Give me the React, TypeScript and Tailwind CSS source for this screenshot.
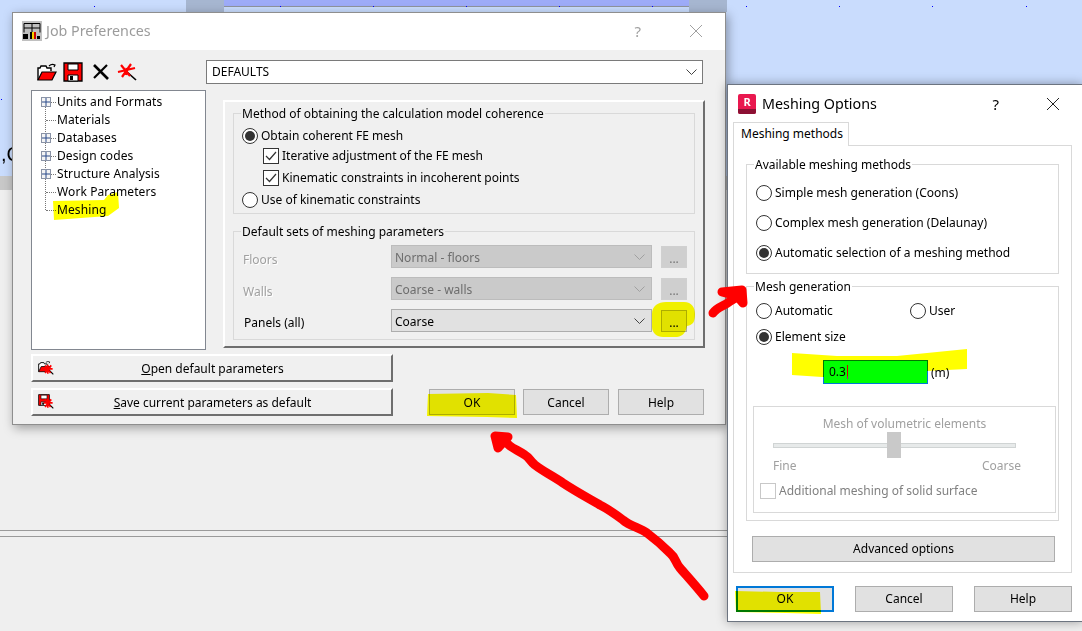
import React from "react";

const Radio = ({ on }: { on?: boolean }) => (
  <span className="flex h-[16px] w-[16px] shrink-0 items-center justify-center rounded-full border-[1.5px] border-[#333] bg-white">
    {on && <span className="h-[10px] w-[10px] rounded-full bg-[#333]" />}
  </span>
);

const Check = () => (
  <span className="flex h-[16px] w-[16px] shrink-0 items-center justify-center border border-[#333] bg-white">
    <svg width="12" height="10" viewBox="0 0 12 10"><path d="M1 5l3.5 3.5L11 1" fill="none" stroke="#333" strokeWidth="1.2" /></svg>
  </span>
);

const Chevron = ({ c = "#444" }: { c?: string }) => (
  <svg width="11" height="6" viewBox="0 0 11 6" className="shrink-0"><path d="M.5.5l5 5 5-5" fill="none" stroke={c} strokeWidth="1" /></svg>
);

const Cross = ({ c }: { c: string }) => (
  <svg width="14" height="14" viewBox="0 0 14 14" className="block"><path d="M1 1l12 12M13 1L1 13" stroke={c} strokeWidth="1" fill="none" /></svg>
);

const Combo = ({ label, off }: { label: string; off?: boolean }) => (
  <div className={`flex h-[23px] w-[261px] items-center justify-between border pl-[3px] pr-[6px] ${off ? "border-[#bcbcbc] bg-[#cacaca] text-[#6d6d6d]" : "border-[#adadad] bg-[#e1e1e1] text-black"}`}>
    <span className="pt-[2px]">{label}</span>
    <Chevron c={off ? "#a0a0a0" : "#444"} />
  </div>
);

const Dots = ({ off }: { off?: boolean }) => (
  <div className={`mt-[1px] flex h-[22px] w-[26px] items-end justify-center border pb-[2px] leading-none ${off ? "border-[#d0d0d0] bg-[#cfcfcf] text-[#777]" : "border-[#adadad] bg-[#e1e1e1] text-black"}`}>...</div>
);

const Btn = ({ children, w, focus }: { children: React.ReactNode; w: string; focus?: boolean }) => (
  <div className={`flex h-[26px] items-center justify-center ${w} ${focus ? "border-2 border-[#0078d7] bg-[#e1e1e1]" : "border border-[#adadad] bg-[#e1e1e1]"}`}>{children}</div>
);

const Group = ({ title, h, bg, children }: { title: string; h: string; bg: string; children: React.ReactNode }) => (
  <div className={`relative border border-[#d9d9d9] ${h}`}>
    <span className={`absolute left-[7px] top-[-8px] px-[1px] leading-[16px] ${bg}`}>{title}</span>
    {children}
  </div>
);

const Folder = ({ s = 20 }: { s?: number }) => (
  <svg width={s} height={s} viewBox="0 0 20 20" className="block shrink-0">
    <path d="M1 18V6h2l1-2h5l1 2h4v3" fill="#fff" stroke="#000" strokeWidth="1.4" />
    <path d="M1 18l4-8h14l-4 8z" fill="#f00" stroke="#000" strokeWidth="1.2" />
    <path d="M12 4c2-2 4-2 6-1l-1 2" fill="none" stroke="#000" strokeWidth="1.2" />
  </svg>
);

const Floppy = ({ s = 20 }: { s?: number }) => (
  <svg width={s} height={s} viewBox="0 0 20 20" className="block shrink-0">
    <path d="M1 1h18v18H1z" fill="#f00" stroke="#000" strokeWidth="1.3" />
    <path d="M5 2h10v6H5z" fill="#fff" stroke="#000" strokeWidth="1" />
    <path d="M5 13h10v6H5z" fill="#fff" stroke="#000" strokeWidth="1" />
    <path d="M7 14h3v4H7z" fill="#000" />
  </svg>
);

const XIcon = () => (
  <svg width="18" height="18" viewBox="0 0 18 18" className="block shrink-0">
    <path d="M2 2l14 14" stroke="#000" strokeWidth="2.6" />
    <path d="M15 2L2 15" stroke="#000" strokeWidth="2.2" />
  </svg>
);

const Star = () => (
  <svg width="20" height="18" viewBox="0 0 20 18" className="block shrink-0">
    <path d="M10 9l9 8" stroke="#000" strokeWidth="1.6" />
    <path d="M1 9l17-4M4 2l9 11M14 1L5 14" stroke="#f00" strokeWidth="2.2" />
    <path d="M10 5l-1 7" stroke="#f00" strokeWidth="3" />
  </svg>
);

const SmallStar = () => (
  <svg width="11" height="11" viewBox="0 0 16 16" className="absolute left-[5px] top-[4px]">
    <path d="M8 8l7 7" stroke="#000" strokeWidth="1.6" />
    <path d="M1 7h13M3 2l8 11M12 2L3 13M7 1v13" stroke="#f00" strokeWidth="2.4" />
  </svg>
);

const JobIcon = () => (
  <svg width="20" height="20" viewBox="0 0 20 20" className="shrink-0">
    <rect width="20" height="20" fill="#c0c0c0" />
    <path d="M2 2.5h16M2 2.5v9M10 2.5v9M18 2.5v9M2 7h16" stroke="#000" strokeWidth="1" fill="none" />
    <rect x="1" y="13" width="5" height="5" fill="#000" />
    <rect x="8" y="11" width="2" height="7" fill="#000" />
    <rect x="10" y="11" width="2" height="7" fill="#f2d400" />
    <rect x="12" y="11" width="2" height="7" fill="#c00" />
    <rect x="15" y="15" width="3" height="3" fill="#000" />
  </svg>
);

const Tree = ({ label, plus }: { label: string; plus?: boolean }) => (
  <div className="flex h-[18px] items-center">
    <span className="flex w-[25px] items-center pl-[9px]">
      {plus ? (
        <span className="z-10 flex h-[10px] w-[10px] shrink-0 items-center justify-center border border-[#8a93a6] bg-[#f4f4f4]">
          <svg width="8" height="8" viewBox="0 0 8 8"><path d="M0 4h8M4 0v8" stroke="#2a4a8a" strokeWidth="1" /></svg>
        </span>
      ) : <span className="ml-[4px] w-[1px]" />}
      <span className={`border-t border-dotted border-[#777] ${plus ? "w-[5px]" : "w-[10px]"}`} />
    </span>
    <span className="tracking-[0.1px]">{label}</span>
  </div>
);

const treeItems: [string, boolean][] = [
  ["Units and Formats", true], ["Materials", false], ["Databases", true], ["Design codes", true],
  ["Structure Analysis", true], ["Work Parameters", false], ["Meshing", false],
];

const grid: [number, number][] = [[94, 6], [280, 6], [373, 6], [466, 6], [559, 6], [652, 6], [746, 6], [839, 6], [932, 6], [1026, 6], [1, 99]];

const Raised = ({ children, icon }: { children: React.ReactNode; icon: React.ReactNode }) => (
  <div className="relative flex h-[28px] w-[362px] items-center justify-center border-2 border-b-[#6e6e6e] border-l-white border-r-[#6e6e6e] border-t-white bg-[#f0f0f0] pt-[1px]">
    <span className="absolute left-[5px] top-[4px]">{icon}</span>
    <span className="pl-[1px]">{children}</span>
  </div>
);

export default function App() {
  return (
    <div className="relative h-[631px] w-[1082px] overflow-hidden bg-[#efefef] font-['Noto_Sans',sans-serif] text-[12px] leading-[16px] text-black">
      {/* desktop behind the windows */}
      <div className="flex h-[12px]">
        <div className="w-[186px] bg-[#c9dcfd]" />
        <div className="w-[38px] bg-[#a6b6d0]" />
        <div className="flex w-[465px] flex-col">
          <div className="h-[6px] bg-[#9dabf8]" />
          <div className="h-[1px] bg-[#8f949c]" />
          <div className="flex-1 bg-[#c9dcfd]" />
        </div>
        <div className="w-[38px] bg-[#a6b6d0]" />
        <div className="flex-1 bg-[#c9dcfd]" />
      </div>
      <div className="h-[164px] bg-[#c9dcfd]" />
      <div className="h-[14px] bg-[#c8c8c8]" />
      <div className="mt-[340px] h-[1px] bg-[#9a9a9a]" />
      <div className="mt-[5px] h-[1px] bg-[#9a9a9a]" />
      <span className="absolute left-[1px] top-[139px] font-['Liberation_Sans',sans-serif] text-[20px] leading-[30px]">,C</span>
      {grid.map(([x, y]) => (
        <span key={`${x}-${y}`} className="absolute h-[1px] w-[1px] bg-[#0000ff]" style={{ left: x, top: y }} />
      ))}

      {/* Job Preferences */}
      <div className="absolute left-[12px] top-[12px] flex h-[413px] w-[714px] flex-col border border-[#8e8e8e] shadow-[2px_3px_10px_rgba(0,0,0,0.35)]">
        <div className="flex h-[37px] shrink-0 items-center bg-white pb-[1px] pl-[9px]">
          <JobIcon />
          <span className="ml-[4px] text-[14.3px] text-[#9c9c9c]">Job Preferences</span>
          <span className="ml-auto text-[15px] text-[#a0a0a0]">?</span>
          <span className="ml-[48px] mr-[22px]"><Cross c="#a0a0a0" /></span>
        </div>
        <div className="flex-1 bg-[#f0f0f0] pl-[18px] pt-[10px]">
          <div className="flex h-[23px]">
            <div className="flex w-[175px] items-center gap-[6px] pl-[6px]">
              <Folder />
              <Floppy />
              <span className="ml-[3px]"><XIcon /></span>
              <span className="ml-[1px]"><Star /></span>
            </div>
            <div className="flex h-[24px] w-[497px] items-center justify-between border border-[#7a7a7a] bg-white pl-[5px] pr-[5px]">
              <span>DEFAULTS</span>
              <Chevron />
            </div>
          </div>
          <div className="mt-[7px] flex">
            <div className="relative h-[260px] w-[175px] border border-[#828790] bg-white">
              <div className="absolute left-[13px] top-[8px] h-[111px] border-l border-dotted border-[#777]" />
              <div className="relative pt-[2px]">
                {treeItems.map(([l, p]) => <Tree key={l} label={l} plus={p} />)}
              </div>
            </div>
            <div className="ml-[17px] mt-[10px] h-[248px] w-[482px] border-2 border-b-[#6e6e6e] border-l-white border-r-[#6e6e6e] border-t-white px-[8px] pt-[11px]">
              <Group title="Method of obtaining the calculation model coherence" h="h-[101px]" bg="bg-[#f0f0f0]">
                <div className="flex flex-col pl-[8px] pt-[12px]">
                  <div className="flex h-[20px] items-center gap-[3px]"><Radio on /><span>Obtain coherent FE mesh</span></div>
                  <div className="flex h-[20px] items-center gap-[3px] pl-[21px]"><Check /><span>Iterative adjustment of the FE mesh</span></div>
                  <div className="mt-[2px] flex h-[20px] items-center gap-[3px] pl-[21px]"><Check /><span>Kinematic constraints in incoherent points</span></div>
                  <div className="mt-[2px] flex h-[20px] items-center gap-[3px]"><Radio /><span>Use of kinematic constraints</span></div>
                </div>
              </Group>
              <div className="h-[17px]" />
              <Group title="Default sets of meshing parameters" h="h-[109px]" bg="bg-[#f0f0f0]">
                <div className="flex flex-col gap-[9px] pl-[9px] pt-[13px]">
                  <div className="flex gap-[9px]">
                    <span className="w-[139px] pt-[7px] text-[#a0a0a0] [text-shadow:1px_1px_0_#fff]">Floors</span>
                    <Combo label="Normal - floors" off />
                    <Dots off />
                  </div>
                  <div className="flex gap-[9px]">
                    <span className="w-[139px] pt-[7px] text-[#a0a0a0] [text-shadow:1px_1px_0_#fff]">Walls</span>
                    <Combo label="Coarse - walls" off />
                    <Dots off />
                  </div>
                  <div className="flex gap-[9px]">
                    <span className="w-[139px] pl-[1px] pt-[6px]">Panels (all)</span>
                    <Combo label="Coarse" />
                    <Dots />
                  </div>
                </div>
              </Group>
            </div>
          </div>
          <div className="flex">
            <div className="flex flex-col gap-[6px] pt-[4px]">
              <Raised icon={<span className="relative block h-[15px] w-[16px]"><Folder s={13} /><SmallStar /></span>}>
                <u>O</u>pen default parameters
              </Raised>
              <Raised icon={<span className="relative block h-[15px] w-[16px]"><Floppy s={12} /><SmallStar /></span>}>
                <u>S</u>ave current parameters as default
              </Raised>
            </div>
            <div className="ml-[36px] flex gap-[8px] pt-[39px]">
              <Btn w="w-[86px]"><span className="pt-[1px]">OK</span></Btn>
              <Btn w="w-[86px]"><span className="pt-[1px]">Cancel</span></Btn>
              <div className="ml-[1px]"><Btn w="w-[86px]"><span className="pt-[1px]">Help</span></Btn></div>
            </div>
          </div>
        </div>
      </div>

      {/* Meshing Options */}
      <div className="absolute left-[727px] top-[84px] flex h-[538px] w-[356px] flex-col border border-[#6c7480] bg-white shadow-[0_0_10px_rgba(0,0,0,0.35)]">
        <div className="flex h-[37px] shrink-0 items-center pl-[10px]">
          <div className="flex h-[20px] w-[18px] shrink-0 flex-col overflow-hidden rounded-[2px] bg-[#e9184f]">
            <span className="flex-1 text-center text-[11px] font-bold leading-[15px] text-white">R</span>
            <span className="h-[5px] bg-[#8c1033]" />
          </div>
          <span className="ml-[6px] whitespace-nowrap text-[14.3px]">Meshing Options</span>
          <span className="ml-auto text-[15px]">?</span>
          <span className="ml-[47px] mr-[22px]"><Cross c="#222" /></span>
        </div>
        <div className="relative z-10 ml-[5px] flex h-[24px] w-[116px] items-center border border-b-0 border-[#d9d9d9] bg-white pb-[1px] pl-[7px]">Meshing methods</div>
        <div className="-mt-px ml-[5px] h-[428px] w-[339px] border border-[#d9d9d9] px-[12px] pt-[18px]">
          <Group title="Available meshing methods" h="h-[110px]" bg="bg-white">
            <div className="flex flex-col gap-[10px] pl-[9px] pt-[18px]">
              <div className="flex h-[20px] items-center gap-[3px]"><Radio /><span>Simple mesh generation (Coons)</span></div>
              <div className="flex h-[20px] items-center gap-[3px]"><Radio /><span>Complex mesh generation (Delaunay)</span></div>
              <div className="flex h-[20px] items-center gap-[3px]"><Radio on /><span>Automatic selection of a meshing method</span></div>
            </div>
          </Group>
          <div className="h-[12px]" />
          <Group title="Mesh generation" h="h-[235px]" bg="bg-white">
            <div className="pl-[9px] pt-[14px]">
              <div className="flex h-[20px] items-center">
                <span className="flex w-[154px] items-center gap-[3px]"><Radio /><span>Automatic</span></span>
                <span className="flex items-center gap-[3px]"><Radio /><span>User</span></span>
              </div>
              <div className="mt-[6px] flex h-[20px] items-center gap-[3px]"><Radio on /><span>Element size</span></div>
              <div className="mt-[13px] flex items-center pl-[67px]">
                <div className="flex h-[24px] w-[105px] items-center border border-[#0078d7] bg-[#00ff00] pl-[5px]">
                  <span>0.3</span><span className="ml-[1px] h-[14px] w-[1px] bg-[#d0008a]" />
                </div>
                <span className="ml-[3px] pt-[1px]">(m)</span>
              </div>
            </div>
            <div className="ml-[6px] mt-[22px] h-[107px] w-[303px] border border-[#d9d9d9] pt-[9px] text-[#a0a0a0]">
              <div className="text-center">Mesh of volumetric elements</div>
              <div className="relative ml-[19px] mt-[11px] h-[5px] w-[243px] border border-[#d0d4d4] bg-[#e7eaea]">
                <span className="absolute left-[113px] top-[-12px] h-[26px] w-[14px] bg-[#c9c9c9]" />
              </div>
              <div className="ml-[19px] mt-[10px] flex w-[248px] justify-between"><span>Fine</span><span>Coarse</span></div>
              <div className="ml-[6px] mt-[9px] flex items-center gap-[3px] text-[#808080]">
                <span className="h-[16px] w-[16px] border border-[#c8c8c8]" />
                <span>Additional meshing of solid surface</span>
              </div>
            </div>
          </Group>
          <div className="ml-[6px] mt-[15px]">
            <Btn w="w-[303px]">Advanced options</Btn>
          </div>
        </div>
        <div className="ml-[8px] mt-[13px] flex">
          <Btn w="w-[98px]" focus>OK</Btn>
          <div className="ml-[21px]"><Btn w="w-[98px]">Cancel</Btn></div>
          <div className="ml-[21px]"><Btn w="w-[98px]">Help</Btn></div>
        </div>
      </div>

      {/* markup drawn over the screenshot */}
      <svg width="1082" height="631" viewBox="0 0 1082 631" className="pointer-events-none absolute left-0 top-0 mix-blend-multiply">
        <g fill="#ffff00">
          <path d="M53 201l51-1 4-5 10-3 1 16-11 8-54 4z" />
          <path d="M652 314c0-8 6-12 14-12h18c8 0 11 6 11 12 0 8-2 11-8 12-1 5-3 10-10 11h-14c-6 0-11-4-11-10z" />
          <path d="M428 394l60-1 28 2 1 23-30-1-60-1z" />
          <path d="M792 353l45 3 60 0 30-3 40-4v20l-40 2-60 5-45 1-30-2z" />
          <path d="M735 591l45 1 40 0 1 22-35-1-50-1z" />
        </g>
      </svg>
      <svg width="1082" height="631" viewBox="0 0 1082 631" className="pointer-events-none absolute left-0 top-0">
        <g fill="none" stroke="#ff0000" strokeWidth="9" strokeLinecap="round" strokeLinejoin="round">
          <path d="M704 596C696 586 686 575 680 568C675 562 676 558 670 553C662 545 655 539 647 533C640 528 630 526 623 520C615 514 608 509 600 505C588 498 575 491 563 483C553 476 544 472 535 465C529 460 530 458 525 455C519 451 514 449 510 446L500 437" />
          <path d="M495 436l13 1-10 11z" fill="#ff0000" />
          <path d="M713 313C717 307 724 306 729 302C733 299 737 297 740 296" />
          <path d="M722 292l20-2 1 13-6-7z" fill="#ff0000" />
        </g>
      </svg>
    </div>
  );
}
